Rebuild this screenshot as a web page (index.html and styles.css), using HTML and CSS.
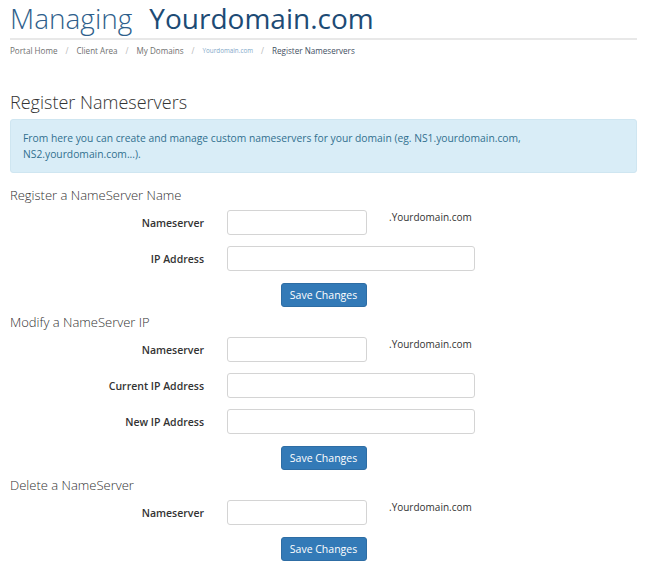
FILE: index.html
```html
<!DOCTYPE html>
<html lang="en">
<head>
<meta charset="utf-8">
<title>Register Nameservers</title>
<link rel="stylesheet" href="styles.css">
</head>
<body>
<div class="page">
  <header class="page-header">
    <h1 class="title"><span class="title-light">Managing</span><span class="title-domain">Yourdomain.com</span></h1>
  </header>
  <ol class="breadcrumb">
    <li><a href="#">Portal Home</a></li>
    <li><a href="#">Client Area</a></li>
    <li><a href="#">My Domains</a></li>
    <li><a href="#" class="crumb-small">Yourdomain.com</a></li>
    <li class="active">Register Nameservers</li>
  </ol>

  <h2 class="page-title">Register Nameservers</h2>
  <div class="alert">From here you can create and manage custom nameservers for your domain (eg. NS1.yourdomain.com, NS2.yourdomain.com...).</div>

  <section class="ns-section">
    <h3 class="section-title">Register a NameServer Name</h3>
    <form class="ns-form">
      <div class="row">
        <label class="row-label">Nameserver</label>
        <div class="row-field"><input class="input input-short" type="text"><span class="suffix">.Yourdomain.com</span></div>
      </div>
      <div class="row">
        <label class="row-label">IP Address</label>
        <div class="row-field"><input class="input input-long" type="text"></div>
      </div>
      <div class="actions"><button type="button" class="btn">Save Changes</button></div>
    </form>
  </section>

  <section class="ns-section">
    <h3 class="section-title">Modify a NameServer IP</h3>
    <form class="ns-form">
      <div class="row">
        <label class="row-label">Nameserver</label>
        <div class="row-field"><input class="input input-short" type="text"><span class="suffix">.Yourdomain.com</span></div>
      </div>
      <div class="row">
        <label class="row-label">Current IP Address</label>
        <div class="row-field"><input class="input input-long" type="text"></div>
      </div>
      <div class="row">
        <label class="row-label">New IP Address</label>
        <div class="row-field"><input class="input input-long" type="text"></div>
      </div>
      <div class="actions"><button type="button" class="btn">Save Changes</button></div>
    </form>
  </section>

  <section class="ns-section">
    <h3 class="section-title">Delete a NameServer</h3>
    <form class="ns-form">
      <div class="row">
        <label class="row-label">Nameserver</label>
        <div class="row-field"><input class="input input-short" type="text"><span class="suffix">.Yourdomain.com</span></div>
      </div>
      <div class="actions"><button type="button" class="btn">Save Changes</button></div>
    </form>
  </section>
</div>
</body>
</html>
```

FILE: styles.css
```css
* { box-sizing: border-box; }

html, body {
  margin: 0;
  padding: 0;
  background: #ffffff;
}

body {
  font-family: "Open Sans", "Liberation Sans", sans-serif;
  color: #333333;
}

.page {
  width: 627px;
  margin-left: 10px;
}

.page-header {
  border-bottom: 2px solid #e8e8e8;
  padding-bottom: 3px;
}

.title {
  margin: 0;
  padding-top: 1px;
  font-size: 28px;
  line-height: 34px;
  font-weight: 400;
  white-space: nowrap;
}

.title-light {
  font-weight: 300;
  color: #2f5f8c;
}

.title-domain {
  margin-left: 17px;
  font-weight: 500;
  color: #1d4b75;
}

.breadcrumb {
  list-style: none;
  margin: 4px 0 0 0;
  padding: 0;
  display: flex;
  align-items: center;
  height: 14px;
  font-size: 8.1px;
  line-height: 14px;
}

.breadcrumb li {
  display: flex;
  align-items: center;
}

.breadcrumb li + li::before {
  content: "/";
  color: #b8b8b8;
  padding: 0 8px;
}

.breadcrumb a {
  color: #6f6f6f;
  text-decoration: none;
}

.breadcrumb a.crumb-small {
  font-size: 6.3px;
  color: #7fa8c9;
}

.breadcrumb .active {
  color: #3f4f5f;
}

.page-title {
  margin: 33px 0 0 0;
  font-size: 18px;
  line-height: 22px;
  font-weight: 300;
  color: #333333;
}

.alert {
  margin-top: 6px;
  padding: 10px 12px;
  background: #d9edf7;
  border: 1px solid #cfe6f1;
  border-radius: 3px;
  color: #31708f;
  font-size: 10.3px;
  line-height: 16px;
}

.ns-section {
  margin-top: 13px;
}

.ns-section + .ns-section {
  margin-top: 6px;
}

.section-title {
  margin: 0;
  font-size: 13px;
  line-height: 18px;
  font-weight: 300;
  color: #333333;
}

.ns-form {
  margin-top: 6px;
  display: flex;
  flex-direction: column;
  gap: 11px;
}

.row {
  display: grid;
  grid-template-columns: 194px 1fr;
  column-gap: 23px;
  align-items: center;
}

.row-label {
  text-align: right;
  font-size: 10.5px;
  font-weight: 600;
  color: #333333;
}

.row-field {
  display: flex;
  align-items: flex-start;
}

.input {
  height: 25px;
  padding: 4px 8px;
  border: 1px solid #d4d4d4;
  border-radius: 3px;
  background: #ffffff;
  font-family: inherit;
  font-size: 10.5px;
}

.input-short { width: 140px; }
.input-long { width: 248px; }

.suffix {
  margin-left: 22px;
  font-size: 10px;
  line-height: 14px;
  color: #333333;
}

.actions {
  margin-top: 1px;
  display: flex;
  justify-content: center;
}

.btn {
  width: 86px;
  height: 24px;
  padding: 0;
  border: 1px solid #2e6da4;
  border-radius: 3px;
  background: #337ab7;
  color: #ffffff;
  font-family: inherit;
  font-size: 10.5px;
  line-height: 22px;
}
```
